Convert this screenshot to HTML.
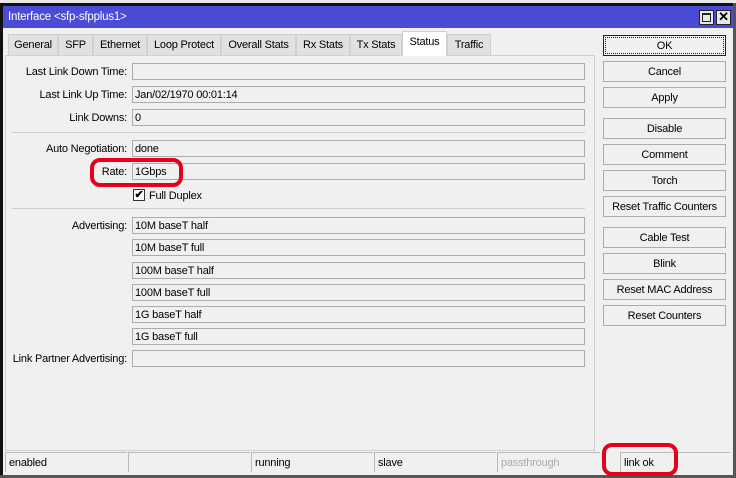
<!DOCTYPE html>
<html><head><style>
*{margin:0;padding:0;box-sizing:border-box}
body{width:736px;height:478px;position:relative;background:#f0f0f0;font-family:"Liberation Sans",sans-serif;font-size:11px;color:#000;overflow:hidden;letter-spacing:-0.2px}
.a{position:absolute}
.f{position:absolute;left:132px;width:453px;height:17px;border:1px solid #acacac;background:#f0f0f0;padding-left:2px;line-height:16px}
.l{position:absolute;right:609px;text-align:right;white-space:nowrap;line-height:18px}
.b{position:absolute;left:603px;width:123px;height:21px;border:1px solid #adadad;background:#f0f0f0;text-align:center;line-height:20px}
.tab{position:absolute;top:34px;height:21px;background:#e1e1e1;border:1px solid #d0d0d0;border-bottom:none;line-height:21px;text-align:center}
.s{position:absolute;top:452px;height:20px;border-left:1px solid #bbb;border-top:1px solid #bbb;line-height:20px;padding-left:3px}
.sep{position:absolute;left:12px;width:573px;height:1px;background:#cfcfcf}
.oval{position:absolute;border:4px solid #e2001a;border-radius:10px}
</style></head><body>
<div class="a" style="left:0;top:0;width:736px;height:4px;background:#e8e8e8"></div>
<div class="a" style="left:0;top:3px;width:736px;height:3px;background:#111"></div>
<div class="a" style="left:0;top:3px;width:3px;height:475px;background:#111"></div>
<div class="a" style="left:733px;top:3px;width:3px;height:475px;background:#555"></div>
<div class="a" style="left:0;top:475px;width:736px;height:3px;background:#555"></div>
<div class="a" style="left:3px;top:6px;width:730px;height:22px;background:#4b4bd6;color:#fff;font-size:11.5px;line-height:22px;padding-left:5px">Interface &lt;sfp-sfpplus1&gt;</div>
<div class="a" style="left:699px;top:10px;width:15px;height:15px;background:#e8e8e8;border:1px solid #222"><div class="a" style="left:2px;top:2px;width:9px;height:9px;border:1.5px solid #222;border-top-width:2px"></div></div>
<div class="a" style="left:716px;top:10px;width:15px;height:15px;background:#e8e8e8;border:1px solid #222;font-weight:bold;font-size:13px;line-height:12px;text-align:center">✕</div>

<div class="tab" style="left:8px;width:50px">General</div>
<div class="tab" style="left:58px;width:35px">SFP</div>
<div class="tab" style="left:93px;width:54px">Ethernet</div>
<div class="tab" style="left:147px;width:74px">Loop Protect</div>
<div class="tab" style="left:221px;width:75px">Overall Stats</div>
<div class="tab" style="left:296px;width:54px">Rx Stats</div>
<div class="tab" style="left:350px;width:52px">Tx Stats</div>
<div class="tab" style="left:402px;width:45px;top:31px;height:25px;background:#fff;border-color:#d0d0d0;z-index:2">Status</div>
<div class="tab" style="left:447px;width:44px">Traffic</div>
<div class="a" style="left:5px;top:55px;width:590px;height:396px;border:1px solid #d0d0d0;background:#f0f0f0"></div>

<div class="l" style="top:63px">Last Link Down Time:</div><div class="f" style="top:63px"></div>
<div class="l" style="top:86px">Last Link Up Time:</div><div class="f" style="top:86px">Jan/02/1970 00:01:14</div>
<div class="l" style="top:109px">Link Downs:</div><div class="f" style="top:109px">0</div>
<div class="sep" style="top:132px"></div>
<div class="l" style="top:140px">Auto Negotiation:</div><div class="f" style="top:140px">done</div>
<div class="l" style="top:163px">Rate:</div><div class="f" style="top:163px">1Gbps</div>
<div class="a" style="left:133px;top:189px;width:12px;height:12px;border:1px solid #333;background:#fff;font-size:11px;line-height:10px;text-align:center;font-weight:bold">✔</div>
<div class="a" style="left:149px;top:187px;line-height:18px">Full Duplex</div>
<div class="sep" style="top:208px"></div>
<div class="l" style="top:217px">Advertising:</div><div class="f" style="top:217px">10M baseT half</div>
<div class="f" style="top:239px">10M baseT full</div>
<div class="f" style="top:262px">100M baseT half</div>
<div class="f" style="top:284px">100M baseT full</div>
<div class="f" style="top:306px">1G baseT half</div>
<div class="f" style="top:328px">1G baseT full</div>
<div class="l" style="top:350px">Link Partner Advertising:</div><div class="f" style="top:350px"></div>
<div class="oval" style="left:90px;top:158px;width:93px;height:29px"></div>

<div class="b" style="top:35px;border:1px solid #222;outline:1px dotted #222;outline-offset:-3px">OK</div>
<div class="b" style="top:61px">Cancel</div>
<div class="b" style="top:87px">Apply</div>
<div class="b" style="top:118px">Disable</div>
<div class="b" style="top:144px">Comment</div>
<div class="b" style="top:170px">Torch</div>
<div class="b" style="top:196px">Reset Traffic Counters</div>
<div class="b" style="top:227px">Cable Test</div>
<div class="b" style="top:253px">Blink</div>
<div class="b" style="top:279px">Reset MAC Address</div>
<div class="b" style="top:305px">Reset Counters</div>

<div class="s" style="left:5px;width:122px">enabled</div>
<div class="s" style="left:128px;width:122px"></div>
<div class="s" style="left:251px;width:122px">running</div>
<div class="s" style="left:374px;width:122px">slave</div>
<div class="s" style="left:497px;width:103px;color:#aaa">passthrough</div>
<div class="s" style="left:620px;width:110px">link ok</div>
<div class="oval" style="left:602px;top:443px;width:76px;height:33px"></div>
</body></html>
